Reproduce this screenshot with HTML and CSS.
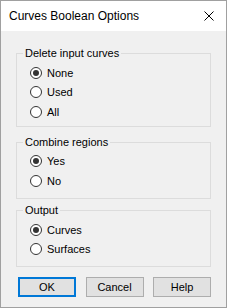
FILE: index.html
```html
<!DOCTYPE html>
<html>
<head>
    <title>Curves Boolean Options</title>
    <link rel="stylesheet" href="styles.css">
</head>
<body>
    <div class="dialog">
        <div class="title-bar">
            <span class="title">Curves Boolean Options</span>
            <span class="close">
                <svg width="10" height="10" viewBox="0 0 10 10">
                    <path d="M0.5 0.5 L9.5 9.5 M9.5 0.5 L0.5 9.5" stroke="#000" stroke-width="1" fill="none"/>
                </svg>
            </span>
        </div>
        <div class="dialog-body">
            <fieldset class="group group-delete">
                <legend>Delete input curves</legend>
                <div class="option"><span class="radio checked"></span>None</div>
                <div class="option"><span class="radio"></span>Used</div>
                <div class="option"><span class="radio"></span>All</div>
            </fieldset>
            <fieldset class="group group-combine">
                <legend>Combine regions</legend>
                <div class="option tall"><span class="radio checked"></span>Yes</div>
                <div class="option tall"><span class="radio"></span>No</div>
            </fieldset>
            <fieldset class="group group-output">
                <legend>Output</legend>
                <div class="option"><span class="radio checked"></span>Curves</div>
                <div class="option"><span class="radio"></span>Surfaces</div>
            </fieldset>
            <div class="buttons">
                <button class="default">OK</button>
                <button>Cancel</button>
                <button>Help</button>
            </div>
        </div>
    </div>
</body>
</html>
```

FILE: styles.css
```css
* {
    box-sizing: border-box;
}
body {
    margin: 0;
    font-family: "Liberation Sans", Arial, sans-serif;
    font-size: 11px;
    color: #000;
}
.dialog {
    width: 227px;
    height: 308px;
    border: 1px solid #a0a0a0;
    background-color: #f0f0f0;
    display: flex;
    flex-direction: column;
}
.title-bar {
    height: 30px;
    background-color: #fff;
    display: flex;
    align-items: center;
    justify-content: space-between;
    padding-left: 8px;
}
.title {
    font-size: 12px;
}
.close {
    width: 34px;
    height: 30px;
    display: flex;
    align-items: center;
    justify-content: center;
}
.dialog-body {
    padding: 0 15px;
}
.group {
    margin: 0;
    border: 1px solid #dcdcdc;
    padding: 0 6px;
}
.group legend {
    padding: 0 2px;
    line-height: 13px;
}
.group-delete {
    margin-top: 16px;
    padding-top: 3px;
    padding-bottom: 4.5px;
}
.group-combine {
    margin-top: 9px;
    padding-top: 2px;
    padding-bottom: 7px;
}
.group-output {
    margin-top: 5px;
    padding-top: 3px;
    padding-bottom: 7px;
}
.option {
    height: 19.5px;
    display: flex;
    align-items: center;
    padding-left: 7px;
}
.option.tall {
    height: 20px;
}
.radio {
    width: 12px;
    height: 12px;
    border: 1px solid #333;
    border-radius: 50%;
    background-color: #fff;
    margin-right: 5px;
    display: flex;
    align-items: center;
    justify-content: center;
}
.radio.checked::after {
    content: "";
    width: 6px;
    height: 6px;
    border-radius: 50%;
    background-color: #333;
}
.buttons {
    margin-top: 10px;
    padding-left: 2px;
    display: flex;
    justify-content: space-between;
}
button {
    width: 58px;
    height: 20px;
    padding: 0;
    font-family: "Liberation Sans", Arial, sans-serif;
    font-size: 11px;
    color: #000;
    background-color: #e1e1e1;
    border: 1px solid #adadad;
    border-radius: 0;
}
button.default {
    border: 2px solid #0078d7;
}
```
